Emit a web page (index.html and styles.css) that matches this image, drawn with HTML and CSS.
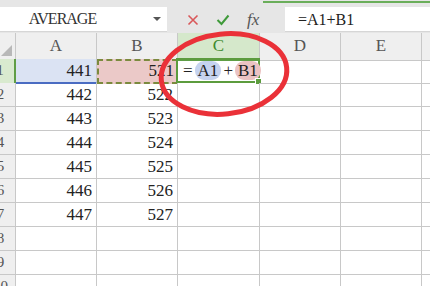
FILE: index.html
```html
<!DOCTYPE html>
<html lang="en">
<head>
    <meta charset="UTF-8">
    <title>Sheet</title>
    <link rel="stylesheet" href="styles.css">
</head>
<body>
    <div class="toolbar">
        <div class="name-box">
            <span class="name">AVERAGE</span>
            <span class="drop"></span>
        </div>
        <div class="actions">
            <svg class="icon" width="12" height="12" viewBox="0 0 12 12"><path d="M1.5 1.5 L10.5 10.5 M10.5 1.5 L1.5 10.5" stroke="#d9585a" stroke-width="1.6" fill="none"/></svg>
            <svg class="icon" width="14" height="12" viewBox="0 0 14 12"><path d="M1.5 6 L5.5 10 L12.5 1.5" stroke="#3f9a3a" stroke-width="2" fill="none"/></svg>
            <span class="fx">fx</span>
        </div>
        <div class="formula">=A1+B1</div>
    </div>

    <div class="sheet">
        <div class="row head">
            <div class="rh corner"><span class="tri"></span></div>
            <div class="ch">A</div>
            <div class="ch">B</div>
            <div class="ch sel">C</div>
            <div class="ch">D</div>
            <div class="ch">E</div>
            <div class="ch"></div>
        </div>
        <div class="row">
            <div class="rh sel">1</div>
            <div class="c num ref-a">441</div>
            <div class="c num ref-b">521</div>
            <div class="c edit">
                <span class="eq">=</span><span class="pill blue">A1</span><span class="op">+</span><span class="pill pink">B1</span><span class="caret"></span>
                <span class="handle"></span>
            </div>
            <div class="c"></div>
            <div class="c"></div>
            <div class="c"></div>
        </div>
        <div class="row">
            <div class="rh">2</div>
            <div class="c num">442</div>
            <div class="c num">522</div>
            <div class="c"></div><div class="c"></div><div class="c"></div><div class="c"></div>
        </div>
        <div class="row">
            <div class="rh">3</div>
            <div class="c num">443</div>
            <div class="c num">523</div>
            <div class="c"></div><div class="c"></div><div class="c"></div><div class="c"></div>
        </div>
        <div class="row">
            <div class="rh">4</div>
            <div class="c num">444</div>
            <div class="c num">524</div>
            <div class="c"></div><div class="c"></div><div class="c"></div><div class="c"></div>
        </div>
        <div class="row">
            <div class="rh">5</div>
            <div class="c num">445</div>
            <div class="c num">525</div>
            <div class="c"></div><div class="c"></div><div class="c"></div><div class="c"></div>
        </div>
        <div class="row">
            <div class="rh">6</div>
            <div class="c num">446</div>
            <div class="c num">526</div>
            <div class="c"></div><div class="c"></div><div class="c"></div><div class="c"></div>
        </div>
        <div class="row">
            <div class="rh">7</div>
            <div class="c num">447</div>
            <div class="c num">527</div>
            <div class="c"></div><div class="c"></div><div class="c"></div><div class="c"></div>
        </div>
        <div class="row">
            <div class="rh">8</div>
            <div class="c"></div><div class="c"></div><div class="c"></div><div class="c"></div><div class="c"></div><div class="c"></div>
        </div>
        <div class="row">
            <div class="rh">9</div>
            <div class="c"></div><div class="c"></div><div class="c"></div><div class="c"></div><div class="c"></div><div class="c"></div>
        </div>
        <div class="row">
            <div class="rh">10</div>
            <div class="c"></div><div class="c"></div><div class="c"></div><div class="c"></div><div class="c"></div><div class="c"></div>
        </div>
    </div>

    <!-- hand drawn marker circle over the formula cell -->
    <svg class="mark" width="430" height="286" viewBox="0 0 430 286">
        <ellipse cx="224" cy="74" rx="63" ry="40" transform="rotate(-6 224 74)" fill="none" stroke="#ea3138" stroke-width="5"/>
    </svg>
</body>
</html>
```

FILE: styles.css
```css
body {
    margin: 0;
    width: 430px;
    height: 286px;
    overflow: hidden;
    position: relative;
    background: #fff;
    font-family: "Liberation Serif", "Times New Roman", "DejaVu Serif", serif;
    color: #222;
}

.toolbar {
    display: flex;
    align-items: stretch;
    height: 26px;
    padding: 7px 0 0;
    background: #e6e6e6;
    position: relative;
}

.toolbar::before {
    content: "";
    position: absolute;
    top: 1px;
    left: 263px;
    right: 0;
    height: 2px;
    background: #6aae5a;
}

.name-box {
    width: 167px;
    height: 25px;
    background: #fff;
    border-bottom: 1px solid #d6d6d6;
    display: flex;
    align-items: center;
    box-sizing: border-box;
}

.name {
    flex: 1;
    text-align: center;
    font-size: 16px;
    letter-spacing: -1px;
    color: #333;
    padding-right: 28px;
}

.drop {
    width: 0;
    height: 0;
    border-left: 4px solid transparent;
    border-right: 4px solid transparent;
    border-top: 4px solid #555;
    margin-right: 6px;
}

.actions {
    width: 118px;
    display: flex;
    align-items: center;
    height: 25px;
}

.actions .icon:first-child {
    margin-left: 20px;
}

.actions .icon:nth-child(2) {
    margin-left: 17px;
}

.fx {
    margin-left: 17px;
    font-style: italic;
    font-size: 17px;
    color: #555;
}

.formula {
    flex: 1;
    height: 25px;
    background: #fff;
    border-bottom: 1px solid #d6d6d6;
    box-sizing: border-box;
    padding-left: 13px;
    font-size: 16px;
    line-height: 25px;
    color: #222;
}

.sheet {
    margin-left: -14px;
}

.row {
    display: grid;
    grid-template-columns: 30px 81px 81px 82px 81px 81px 81px;
    height: 24px;
}

.row.head {
    height: 26px;
}

.rh, .ch, .c {
    box-sizing: border-box;
    border-right: 1px solid #c8c8c8;
    border-bottom: 1px solid #c8c8c8;
    position: relative;
}

.rh {
    background: #efefef;
    color: #555;
    font-size: 15px;
    text-align: center;
    line-height: 23px;
}

.rh.sel {
    background: #d9eacf;
    border-right: 2px solid #5f9e45;
}

.tri {
    position: absolute;
    left: 15px;
    bottom: 4px;
    width: 0;
    height: 0;
    border-left: 11px solid transparent;
    border-bottom: 11px solid #b8b8b8;
}

.ch {
    background: #efefef;
    color: #555;
    font-size: 17px;
    text-align: center;
    line-height: 26px;
}

.ch.sel {
    background: #d5e8cb;
    color: #3d8a2f;
    border-bottom: 2px solid #5f9e45;
}

.c {
    font-size: 17px;
    line-height: 23px;
}

.num {
    text-align: right;
    padding-right: 4px;
}

.ref-a {
    background: #dbe3f3;
    border-bottom: 2px solid #4a6cc2;
}

.ref-b {
    background: #ebc9c8;
    border: 2px dashed #7b8a3e;
    line-height: 20px;
    padding-right: 2px;
}

.edit {
    border: 2px solid #5c9c3e;
    display: flex;
    align-items: center;
    padding-left: 3px;
    margin-left: -2px;
    margin-top: -1px;
    height: 25px;
}

.eq, .op {
    padding: 0 2px;
}

.pill {
    border-radius: 9px;
    padding: 0 3px;
    line-height: 19px;
}

.pill.blue {
    background: #c6d3ef;
}

.pill.pink {
    background: #ebc3c3;
}

.caret {
    width: 1px;
    height: 17px;
    background: #111;
    margin-left: 4px;
}

.handle {
    position: absolute;
    right: -4px;
    bottom: -4px;
    width: 5px;
    height: 5px;
    background: #5c9c3e;
    border: 1px solid #fff;
}

.mark {
    position: absolute;
    top: 0;
    left: 0;
    pointer-events: none;
}
```
